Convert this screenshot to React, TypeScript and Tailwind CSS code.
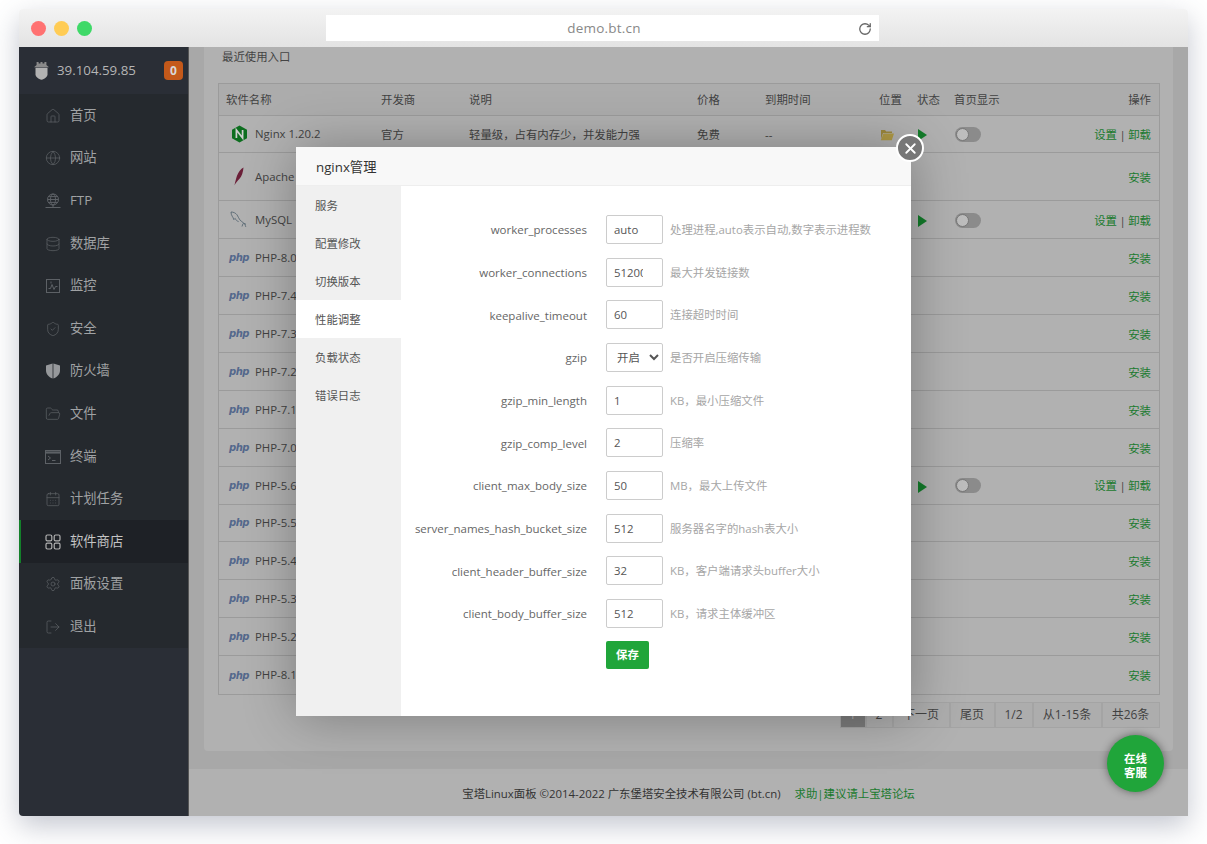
import { FolderOpen, Globe, House, Database, ShieldCheck, Settings, LogOut, RotateCw, X, CalendarDays } from "lucide-react"
import type { ReactNode } from "react"

const iconProps = { size: 16, strokeWidth: 1.1 }

function FtpIcon() {
  return (
    <svg width="16" height="16" viewBox="0 0 16 16" fill="none" stroke="currentColor" strokeWidth="1">
      <circle cx="8" cy="6.5" r="5.5" />
      <ellipse cx="8" cy="6.5" rx="2.5" ry="5.5" />
      <path d="M2.5 6.5h11M3.5 3.6h9M3.5 9.4h9M0.5 14.5h15M8 12v2.5" />
    </svg>
  )
}

function MonitorIcon() {
  return (
    <svg width="16" height="16" viewBox="0 0 16 16" fill="none" stroke="currentColor" strokeWidth="1">
      <rect x="1.5" y="1.5" width="13" height="13" />
      <path d="M3.5 10.5h2l1.5-4 2 5 1.5-3h2M6 3.5v2" />
    </svg>
  )
}

function FirewallIcon() {
  return (
    <svg width="16" height="16" viewBox="0 0 16 16" fill="currentColor">
      <path d="M1 2.5 7.6 0.4v15.2C3.6 14.2 1 11 1 7.5zM8.4 0.4 15 2.5v5c0 3.5-2.6 6.7-6.6 8.1z" />
    </svg>
  )
}

function TerminalIcon() {
  return (
    <svg width="16" height="16" viewBox="0 0 16 16" fill="none" stroke="currentColor" strokeWidth="1">
      <rect x="0.5" y="1.5" width="15" height="13" />
      <path d="M0.5 3.5h15" strokeWidth="2.2" />
      <path d="m3 7 2.5 2L3 11M7 11.5h3.5" />
    </svg>
  )
}

function GridIcon() {
  return (
    <svg width="16" height="16" viewBox="0 0 16 16" fill="none" stroke="currentColor" strokeWidth="1.2">
      <rect x="1" y="1" width="5.8" height="5.8" rx="1.4" />
      <rect x="9.2" y="1" width="5.8" height="5.8" rx="1.4" />
      <rect x="1" y="9.2" width="5.8" height="5.8" rx="1.4" />
      <rect x="9.2" y="9.2" width="5.8" height="5.8" rx="1.4" />
    </svg>
  )
}

const navItems: { label: string; icon: ReactNode; active?: boolean; bright?: boolean }[] = [
  { label: "首页", icon: <House {...iconProps} /> },
  { label: "网站", icon: <Globe {...iconProps} /> },
  { label: "FTP", icon: <FtpIcon /> },
  { label: "数据库", icon: <Database {...iconProps} /> },
  { label: "监控", icon: <MonitorIcon /> },
  { label: "安全", icon: <ShieldCheck {...iconProps} /> },
  { label: "防火墙", icon: <FirewallIcon />, bright: true },
  { label: "文件", icon: <FolderOpen {...iconProps} /> },
  { label: "终端", icon: <TerminalIcon /> },
  { label: "计划任务", icon: <CalendarDays {...iconProps} /> },
  { label: "软件商店", icon: <GridIcon />, active: true },
  { label: "面板设置", icon: <Settings {...iconProps} /> },
  { label: "退出", icon: <LogOut {...iconProps} /> },
]

const softwares = [
  { name: "Nginx 1.20.2", logo: "nginx", dev: "官方", desc: "轻量级，占有内存少，并发能力强", price: "免费", expire: "--", installed: true, folder: true },
  { name: "Apache", logo: "apache", tall: true },
  { name: "MySQL", logo: "mysql", installed: true },
  { name: "PHP-8.0", logo: "php" },
  { name: "PHP-7.4", logo: "php" },
  { name: "PHP-7.3", logo: "php" },
  { name: "PHP-7.2", logo: "php" },
  { name: "PHP-7.1", logo: "php" },
  { name: "PHP-7.0", logo: "php" },
  { name: "PHP-5.6", logo: "php", installed: true },
  { name: "PHP-5.5", logo: "php" },
  { name: "PHP-5.4", logo: "php" },
  { name: "PHP-5.3", logo: "php" },
  { name: "PHP-5.2", logo: "php" },
  { name: "PHP-8.1", logo: "php" },
]

const pages = [
  { label: "1", w: "w-[26px]", active: true },
  { label: "2", w: "w-[27px]" },
  { label: "下一页", w: "w-[57px]" },
  { label: "尾页", w: "w-[45px]" },
  { label: "1/2", w: "w-[38px]" },
  { label: "从1-15条", w: "w-[69px]" },
  { label: "共26条", w: "w-[58px]" },
]

const modalTabs = ["服务", "配置修改", "切换版本", "性能调整", "负载状态", "错误日志"]

const settings = [
  { name: "worker_processes", value: "auto", help: "处理进程,auto表示自动,数字表示进程数" },
  { name: "worker_connections", value: "51200", help: "最大并发链接数" },
  { name: "keepalive_timeout", value: "60", help: "连接超时时间" },
  { name: "gzip", select: true, help: "是否开启压缩传输" },
  { name: "gzip_min_length", value: "1", help: "KB，最小压缩文件" },
  { name: "gzip_comp_level", value: "2", help: "压缩率" },
  { name: "client_max_body_size", value: "50", help: "MB，最大上传文件" },
  { name: "server_names_hash_bucket_size", value: "512", help: "服务器名字的hash表大小" },
  { name: "client_header_buffer_size", value: "32", help: "KB，客户端请求头buffer大小" },
  { name: "client_body_buffer_size", value: "512", help: "KB，请求主体缓冲区" },
]

const rowCols = "grid grid-cols-[154px_88px_228px_68px_114px_38px_37px_1fr_auto] items-center"

function SoftLogo({ kind }: { kind?: string }) {
  if (kind === "nginx") {
    return (
      <svg width="17" height="18" viewBox="0 0 17 18">
        <path d="M8.5 0.5 16 4.8v8.4l-7.5 4.3L1 13.2V4.8z" fill="#0d6e1f" />
        <path d="M5.4 13V5l6.2 8V5" fill="none" stroke="#cfcfcf" strokeWidth="1.7" />
      </svg>
    )
  }
  if (kind === "apache") {
    return (
      <svg width="20" height="19" viewBox="0 0 20 19">
        <path d="M14.5 0.5c-2.6 1.4-5.2 4.6-6.6 8.6-.8 2.4-1.6 5.6-2.4 9.2 1.6-2.6 3.2-4.6 4.8-6.2 2.6-3 3.8-7 4.2-11.6z" fill="#6b1f38" />
      </svg>
    )
  }
  if (kind === "mysql") {
    return (
      <svg width="18" height="18" viewBox="0 0 18 18" fill="none" stroke="#4e5f6c" strokeWidth="0.8">
        <path d="M1 1c2.4 0 4.6 1 6 2.8 1.2 1.6 1.6 3.4 2.8 5 1.1 1.4 2.8 2.2 4 3.3.9.8 1.5 2 2 3.8" />
        <path d="M1 1c0 1.8.5 3 1.2 4.2.7 1.2 1.3 2 1.6 3.4.6-.7 1-1 1.4-1.2.5 1.4 1.6 2.6 3.4 3.2" />
        <path d="M13.4 12.4c.9.1 1.7.3 2.6.9M12 15.5c.3-1 .6-1.8 1-2.8" />
      </svg>
    )
  }
  return <span className="text-[10px] font-bold italic text-[#54688c] font-['DejaVu_Sans',sans-serif] tracking-[-0.5px]">php</span>
}

function SoftwareRow({ row }: { row: (typeof softwares)[number] }) {
  return (
    <div className={`${rowCols} ${row.tall ? "h-[48px]" : "h-[37.9px]"} pt-[1px] border-b border-[#9b9b9b] last:border-b-0`}>
      <div className="flex items-center -mt-[1px] pl-[10px] whitespace-nowrap overflow-hidden">
        <span className="w-[20px] mr-[6px] flex justify-center shrink-0"><SoftLogo kind={row.logo} /></span>
        {row.name}
      </div>
      <div className="pl-[8px]">{row.dev}</div>
      <div className="pl-[8px] whitespace-nowrap">{row.desc}</div>
      <div className="pl-[8px]">{row.price}</div>
      <div className="pl-[8px]">{row.expire}</div>
      <div className="pl-[9px]">
        {row.folder && (
          <svg width="14" height="12" viewBox="0 0 14 12" className="mt-[1px]">
            <path d="M1 1h4l1.2 1.4H12V4H3L1 10z" fill="#9c883c" />
            <path d="M3.4 4.6H14l-2.2 6.6H0.8z" fill="#b09a45" />
          </svg>
        )}
      </div>
      <div className="pl-[9px]">
        {row.installed && (
          <svg width="9" height="12" viewBox="0 0 9 12" className="mt-[2px]"><path d="M0 0l9 6-9 6z" fill="#137c2a" /></svg>
        )}
      </div>
      <div className="pl-[9px]">
        {row.installed && (
          <div className="w-[26px] h-[15px] rounded-full bg-[#8b8b8b] p-[1px]">
            <div className="w-[13px] h-[13px] rounded-full bg-[#bdbdbd] border border-[#777]" />
          </div>
        )}
      </div>
      <div className={`pr-[8px] text-right text-[#1a7a2e] whitespace-nowrap ${row.installed ? "" : "mt-[1px]"}`}>
        {row.installed ? <>设置<span className="text-[#444] mx-[2.5px]">|</span>卸载</> : "安装"}
      </div>
    </div>
  )
}

function NginxModal() {
  return (
    <div className="absolute left-[277px] top-[138px] w-[615px] h-[569px] bg-white shadow-[1px_1px_50px_rgba(0,0,0,0.3)] flex flex-col">
      <div className="h-[39px] shrink-0 bg-[#f8f8f8] border-b border-[#eee] pl-[20px] pt-[3px] flex items-center text-[13.3px] text-[#333]">nginx管理</div>
      <div className="flex flex-1">
        <div className="w-[105px] bg-[#f0f0f0]">
          {modalTabs.map((tab) => (
            <div key={tab} className={`h-[38px] pl-[19px] pt-[2px] flex items-center text-[#555] ${tab === "性能调整" ? "bg-white" : ""}`}>{tab}</div>
          ))}
        </div>
        <div className="flex-1 pt-[29px] flex flex-col gap-[13.67px]">
          {settings.map((item) => (
            <div key={item.name} className="flex items-center h-[29px]">
              <label className="w-[186px] pt-[1px] text-right text-[11.5px] text-[#666] whitespace-nowrap">{item.name}</label>
              <div className="ml-[19px] w-[57px] h-[29px]">
                {item.select ? (
                  <select defaultValue="on" className="w-full h-full bg-white border border-[#ccc] rounded-[2px] pl-[6px] text-[#555]">
                    <option value="on">开启</option>
                    <option value="off">关闭</option>
                  </select>
                ) : (
                  <input defaultValue={item.value} className="w-full h-full border border-[#ccc] rounded-[2px] pl-[7px] pr-[19px] text-[#555] outline-none" />
                )}
              </div>
              <span className="ml-[7px] text-[#a6a6a6] whitespace-nowrap">{item.help}</span>
            </div>
          ))}
          <div className="-mt-[1px] pl-[205px]">
            <button className="w-[43px] h-[28px] bg-[#20a53a] text-white rounded-[2px] font-semibold">保存</button>
          </div>
        </div>
      </div>
      <button className="absolute -top-[13px] -right-[13px] w-[28px] h-[28px] rounded-full bg-[#777] border-2 border-white flex items-center justify-center text-white">
        <X size={17} strokeWidth={2.6} />
      </button>
    </div>
  )
}

export default function App() {
  return (
    <div className="w-[1207px] h-[844px] bg-white pt-[9px] pl-[19px] text-[11.4px] font-['Open_Sans','Noto_Sans_CJK_SC',sans-serif] overflow-hidden">
      <div className="relative w-[1169px] h-[807px] rounded-[4px] flex flex-col shadow-[0_10px_28px_rgba(70,80,110,0.32)]">
        {/* browser chrome */}
        <div className="h-[38px] shrink-0 rounded-t-[4px] bg-gradient-to-b from-[#f3f3f3] to-[#e3e3e3] flex items-center">
          <div className="flex gap-[8px] pl-[11.5px] w-[307px]">
            <span className="w-[15px] h-[15px] rounded-full bg-[#ff7272]" />
            <span className="w-[15px] h-[15px] rounded-full bg-[#ffcc55]" />
            <span className="w-[15px] h-[15px] rounded-full bg-[#3fd968]" />
          </div>
          <div className="relative w-[553px] h-[26px] pl-[3px] bg-white text-[13.5px] tracking-[0.2px] text-[#888] flex items-center justify-center">
            demo.bt.cn
            <RotateCw size={14} strokeWidth={2.2} className="absolute right-[7px] top-[7px] text-[#666]" />
          </div>
        </div>

        <div className="flex flex-1 min-h-0">
          {/* sidebar */}
          <div className="w-[170px] shrink-0 bg-[#2a2e36] rounded-bl-[4px] border-r border-[#555]">
            <div className="h-[47px] flex items-center pl-[15px] pr-[5px]">
              <svg width="15" height="19" viewBox="0 0 15 19" className="shrink-0">
                <path d="M0 6.2 2.6 4V1h2v1.6h1.9V1h2v1.6h1.9V1h2v3L15 6.2z" fill="#8a8a8a" />
                <path d="M1.5 6.8h12v6.4c0 2.8-3.2 4.6-6 5.6-2.8-1-6-2.8-6-5.6z" fill="#b2b2b2" />
              </svg>
              <span className="ml-[8px] text-[13.3px] text-[#b5b5b5]">39.104.59.85</span>
              <span className="ml-auto w-[19px] h-[19px] rounded-[4px] bg-[#c4591a] text-[#d8d8d8] text-[12px] font-bold flex items-center justify-center">0</span>
            </div>
            <div className="bg-[#25292e]">
              {navItems.map((item) => (
                <div
                  key={item.label}
                  className={`h-[42.6px] pt-[1px] flex items-center text-[13.3px] ${item.active ? "bg-[#1e2126] border-l-2 border-[#13802a] pl-[24px] text-[#c4c4c4]" : "pl-[26px] text-[#a0a2a4]"}`}
                >
                  <span className={`w-[16px] mr-[9px] flex justify-center ${item.active ? "text-[#b0b0b0]" : item.bright ? "text-[#96989b]" : "text-[#5d6166]"}`}>{item.icon}</span>
                  {item.label}
                </div>
              ))}
            </div>
          </div>

          {/* main column */}
          <div className="flex-1 min-w-0 flex flex-col bg-[#a8a8a8] text-[#424242]">
            <div className="ml-[15px] mr-[15px] h-[704px] bg-[#b1b1b1] rounded-b-[4px] px-[14px] flex flex-col">
              <div className="pl-[4px] h-[36px] pt-[1px] text-[#444]">最近使用入口</div>
              <div className="w-[942px] border border-[#9b9b9b]">
                <div className={`${rowCols} h-[31.5px] pt-[1px] bg-[#acacac] border-b border-[#9b9b9b]`}>
                  <div className="pl-[7px]">软件名称</div>
                  <div className="pl-[8px]">开发商</div>
                  <div className="pl-[8px]">说明</div>
                  <div className="pl-[8px]">价格</div>
                  <div className="pl-[8px]">到期时间</div>
                  <div className="pl-[8px]">位置</div>
                  <div className="pl-[8px]">状态</div>
                  <div className="pl-[8px]">首页显示</div>
                  <div className="pr-[8px] text-right">操作</div>
                </div>
                {softwares.map((row) => (
                  <SoftwareRow key={row.name} row={row} />
                ))}
              </div>
              <div className="flex justify-end mt-[7px] w-[942px] text-[12px]">
                {pages.map((page) => (
                  <span
                    key={page.label}
                    className={`${page.w} h-[26px] pr-[1px] flex items-center justify-center border border-[#a4a4a4] whitespace-nowrap ${page.active ? "bg-[#7c7c7c] text-[#b1b1b1]" : "bg-[#adadad]"}`}
                  >
                    {page.label}
                  </span>
                ))}
              </div>
            </div>
            <div className="mt-[18px] flex-1 bg-[#b1b1b1] flex items-center justify-center text-[#333] pt-[2px]">
              宝塔Linux面板 ©2014-2022 广东堡塔安全技术有限公司 (bt.cn)
              <span className="ml-[14px] text-[#1a7a2e]">求助|建议请上宝塔论坛</span>
            </div>
          </div>
        </div>

        <NginxModal />

        <div className="absolute left-[1088px] top-[726px] w-[57px] h-[57px] rounded-full bg-[#20a53a] text-white font-semibold leading-[14px] pt-[5px] shadow-[0_0_8px_rgba(0,0,0,0.45)] flex flex-col items-center justify-center text-center">
          <span>在线</span>
          <span>客服</span>
        </div>
      </div>
    </div>
  )
}
